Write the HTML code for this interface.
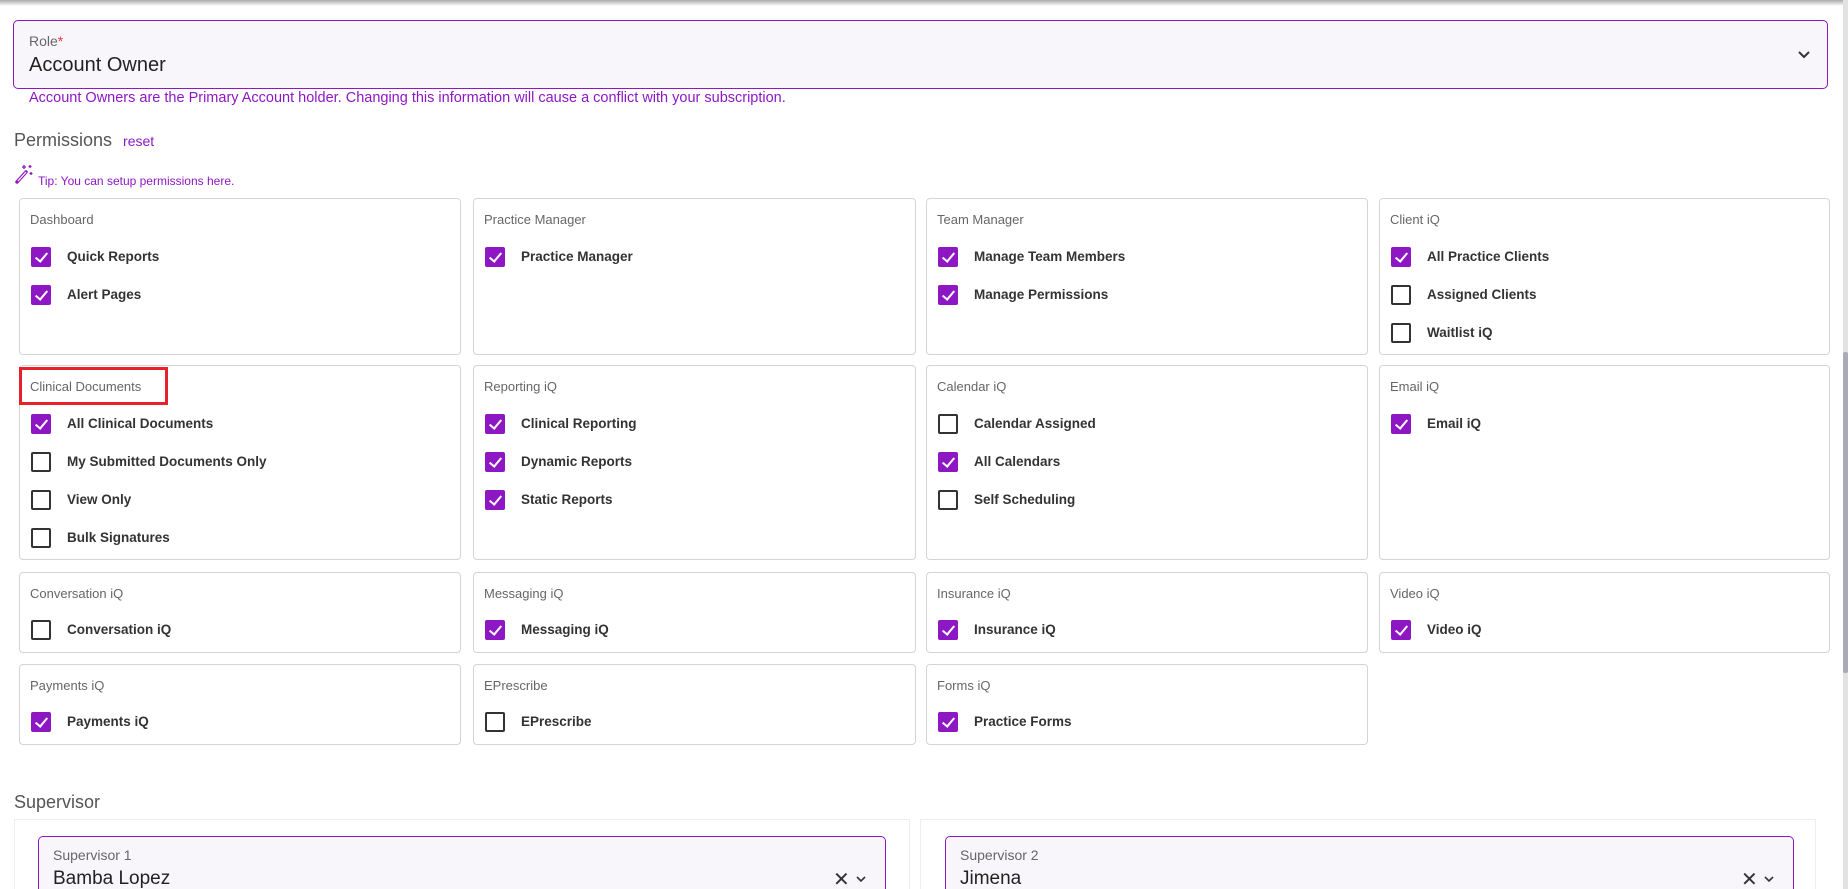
<!DOCTYPE html>
<html><head><meta charset="utf-8"><style>
*{box-sizing:border-box;margin:0;padding:0}
html,body{width:1848px;height:889px;overflow:hidden}
body{background:#fff;font-family:"Liberation Sans",sans-serif;position:relative;color:#222}
.a{position:absolute}
.topsh{left:0;top:0;width:1848px;height:6px;background:linear-gradient(#aaa,#fff)}
.track{left:1843px;top:0;width:5px;height:889px;background:#e2e2e2}
.thumb{left:1843px;top:352px;width:5px;height:321px;background:#a9a9b8;border-radius:2px}
.sel{border:1.5px solid #8e17c4;border-radius:5px;background:#f8f6fa}
.box{border:1px solid #d4d4d4;border-radius:4px;background:#fff}
.bt{position:absolute;left:10px;top:13px;font-size:13px;color:#666}
.it{position:absolute;left:11px;height:20px;font-size:13.5px;font-weight:bold;color:#333;line-height:20px}
.cb{display:inline-block;width:20px;height:20px;border-radius:2px;vertical-align:top;margin-right:16px;position:relative}
.on{background:#8e17c4}
.on:after{content:"";position:absolute;left:7px;top:3px;width:5px;height:10px;border:solid #fff;border-width:0 2px 2px 0;transform:rotate(40deg)}
.off{border:2px solid #333}
</style></head><body>
<div class="a topsh"></div>
<div class="a sel" style="left:13px;top:20px;width:1815px;height:69px">
<div class="a" style="left:15px;top:12px;font-size:14px;color:#666">Role<span style="color:#e53935">*</span></div>
<div class="a" style="left:15px;top:33px;font-size:20px;color:#222">Account Owner</div>
<svg class="a" style="left:1783px;top:29px" width="14" height="10" viewBox="0 0 14 10"><path d="M2 2l5 5 5-5" fill="none" stroke="#333" stroke-width="2"/></svg>
</div>
<div class="a" style="left:29px;top:90px;font-size:14.5px;color:#8e17c4">Account Owners are the Primary Account holder. Changing this information will cause a conflict with your subscription.</div>
<div class="a" style="left:14px;top:130px;font-size:18px;color:#555">Permissions <span style="font-size:14px;color:#8e17c4;margin-left:6px">reset</span></div>
<svg class="a" style="left:14px;top:162px" width="24" height="24" viewBox="0 0 24 24"><path d="M3 20l9-10" stroke="#8e17c4" stroke-width="3.5" stroke-linecap="round"/><path d="M4 19l8-9" stroke="#fff" stroke-width="1.2"/><path d="M10 3v4M8 5h4M16 3v3M14.5 4.5h3M17 10v3M15.5 11.5h3" stroke="#8e17c4" stroke-width="1.3"/></svg>
<div class="a" style="left:38px;top:174px;font-size:12px;color:#8e17c4">Tip: You can setup permissions here.</div>

<div class="a box" style="left:19px;top:198px;width:442px;height:157px"><div class="bt">Dashboard</div>
<div class="it" style="top:48px"><span class="cb on"></span>Quick Reports</div>
<div class="it" style="top:86px"><span class="cb on"></span>Alert Pages</div></div>
<div class="a box" style="left:473px;top:198px;width:443px;height:157px"><div class="bt">Practice Manager</div>
<div class="it" style="top:48px"><span class="cb on"></span>Practice Manager</div></div>
<div class="a box" style="left:926px;top:198px;width:442px;height:157px"><div class="bt">Team Manager</div>
<div class="it" style="top:48px"><span class="cb on"></span>Manage Team Members</div>
<div class="it" style="top:86px"><span class="cb on"></span>Manage Permissions</div></div>
<div class="a box" style="left:1379px;top:198px;width:451px;height:157px"><div class="bt">Client iQ</div>
<div class="it" style="top:48px"><span class="cb on"></span>All Practice Clients</div>
<div class="it" style="top:86px"><span class="cb off"></span>Assigned Clients</div>
<div class="it" style="top:124px"><span class="cb off"></span>Waitlist iQ</div></div>

<div class="a box" style="left:19px;top:365px;width:442px;height:195px"><div class="bt">Clinical Documents</div>
<div class="it" style="top:48px"><span class="cb on"></span>All Clinical Documents</div>
<div class="it" style="top:86px"><span class="cb off"></span>My Submitted Documents Only</div>
<div class="it" style="top:124px"><span class="cb off"></span>View Only</div>
<div class="it" style="top:162px"><span class="cb off"></span>Bulk Signatures</div></div>
<div class="a" style="left:19px;top:367px;width:149px;height:38px;border:3px solid #e8202a"></div>
<div class="a box" style="left:473px;top:365px;width:443px;height:195px"><div class="bt">Reporting iQ</div>
<div class="it" style="top:48px"><span class="cb on"></span>Clinical Reporting</div>
<div class="it" style="top:86px"><span class="cb on"></span>Dynamic Reports</div>
<div class="it" style="top:124px"><span class="cb on"></span>Static Reports</div></div>
<div class="a box" style="left:926px;top:365px;width:442px;height:195px"><div class="bt">Calendar iQ</div>
<div class="it" style="top:48px"><span class="cb off"></span>Calendar Assigned</div>
<div class="it" style="top:86px"><span class="cb on"></span>All Calendars</div>
<div class="it" style="top:124px"><span class="cb off"></span>Self Scheduling</div></div>
<div class="a box" style="left:1379px;top:365px;width:451px;height:195px"><div class="bt">Email iQ</div>
<div class="it" style="top:48px"><span class="cb on"></span>Email iQ</div></div>

<div class="a box" style="left:19px;top:572px;width:442px;height:81px"><div class="bt">Conversation iQ</div>
<div class="it" style="top:47px"><span class="cb off"></span>Conversation iQ</div></div>
<div class="a box" style="left:473px;top:572px;width:443px;height:81px"><div class="bt">Messaging iQ</div>
<div class="it" style="top:47px"><span class="cb on"></span>Messaging iQ</div></div>
<div class="a box" style="left:926px;top:572px;width:442px;height:81px"><div class="bt">Insurance iQ</div>
<div class="it" style="top:47px"><span class="cb on"></span>Insurance iQ</div></div>
<div class="a box" style="left:1379px;top:572px;width:451px;height:81px"><div class="bt">Video iQ</div>
<div class="it" style="top:47px"><span class="cb on"></span>Video iQ</div></div>

<div class="a box" style="left:19px;top:664px;width:442px;height:81px"><div class="bt">Payments iQ</div>
<div class="it" style="top:47px"><span class="cb on"></span>Payments iQ</div></div>
<div class="a box" style="left:473px;top:664px;width:443px;height:81px"><div class="bt">EPrescribe</div>
<div class="it" style="top:47px"><span class="cb off"></span>EPrescribe</div></div>
<div class="a box" style="left:926px;top:664px;width:442px;height:81px"><div class="bt">Forms iQ</div>
<div class="it" style="top:47px"><span class="cb on"></span>Practice Forms</div></div>

<div class="a" style="left:14px;top:792px;font-size:18px;color:#555">Supervisor</div>
<div class="a" style="left:14px;top:819px;width:896px;height:70px;border:1px solid #eee;border-bottom:none"></div>
<div class="a" style="left:920px;top:819px;width:896px;height:70px;border:1px solid #eee;border-bottom:none"></div>
<div class="a sel" style="left:38px;top:836px;width:848px;height:53px;border-bottom:none;border-radius:5px 5px 0 0">
<div class="a" style="left:14px;top:10px;font-size:14px;color:#666">Supervisor 1</div>
<div class="a" style="left:14px;top:31px;font-size:19px;color:#222">Bamba Lopez</div>
<div class="a" style="left:794px;top:30px;font-size:20px;color:#333">✕</div>
<svg class="a" style="left:816px;top:38px" width="12" height="9" viewBox="0 0 12 9"><path d="M2 2l4 4 4-4" fill="none" stroke="#333" stroke-width="1.6"/></svg>
</div>
<div class="a sel" style="left:945px;top:836px;width:849px;height:53px;border-bottom:none;border-radius:5px 5px 0 0">
<div class="a" style="left:14px;top:10px;font-size:14px;color:#666">Supervisor 2</div>
<div class="a" style="left:14px;top:31px;font-size:19px;color:#222">Jimena</div>
<div class="a" style="left:795px;top:30px;font-size:20px;color:#333">✕</div>
<svg class="a" style="left:817px;top:38px" width="12" height="9" viewBox="0 0 12 9"><path d="M2 2l4 4 4-4" fill="none" stroke="#333" stroke-width="1.6"/></svg>
</div>
<div class="a track"></div>
<div class="a thumb"></div>
</body></html>
